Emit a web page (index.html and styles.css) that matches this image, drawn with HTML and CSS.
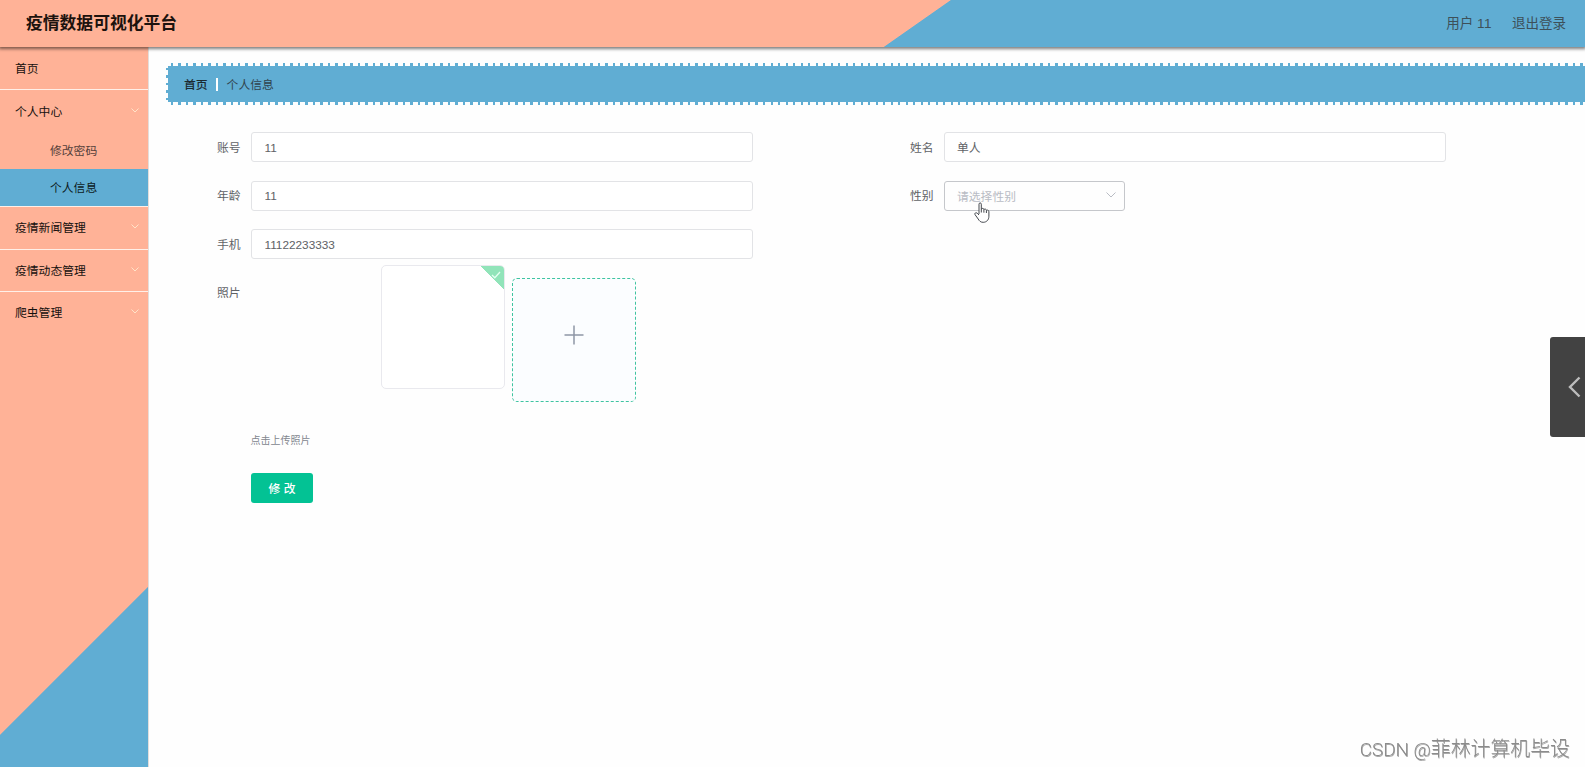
FILE: index.html
```html
<!DOCTYPE html>
<html lang="zh-CN">
<head>
  <meta charset="UTF-8">
  <meta name="viewport" content="width=device-width, initial-scale=1.0">
  <title>疫情数据可视化平台</title>
  <link rel="stylesheet" href="styles.css">
</head>
<body>

  <header class="header">
    <h1 class="title">疫情数据可视化平台</h1>
    <div class="user-menu">
      <span>用户 <span class="user-name">11</span></span>
      <span>退出登录</span>
    </div>
  </header>

  <div class="container">
    <!-- Sidebar -->
    <nav class="sidebar">
      <div class="menu-item first">首页</div>
      <div class="menu-item open">个人中心
        <svg class="arrow" viewBox="0 0 8 5"><path d="M0.5 0.5 L4 4 L7.5 0.5"/></svg>
      </div>
      <div class="submenu">
        <div class="submenu-item">修改密码</div>
        <div class="submenu-item active">个人信息</div>
      </div>
      <div class="menu-item">疫情新闻管理
        <svg class="arrow" viewBox="0 0 8 5"><path d="M0.5 0.5 L4 4 L7.5 0.5"/></svg>
      </div>
      <div class="menu-item">疫情动态管理
        <svg class="arrow" viewBox="0 0 8 5"><path d="M0.5 0.5 L4 4 L7.5 0.5"/></svg>
      </div>
      <div class="menu-item">爬虫管理
        <svg class="arrow" viewBox="0 0 8 5"><path d="M0.5 0.5 L4 4 L7.5 0.5"/></svg>
      </div>
    </nav>

    <main class="main">
      <div class="breadcrumb">
        <div class="breadcrumb-inner">
          <span class="home">首页</span>
          <span class="separator"></span>
          <span>个人信息</span>
        </div>
      </div>

      <!-- Profile form -->
      <form class="form">
        <div class="form-group">
          <label for="account">账号</label>
          <input type="text" id="account" value="11">
        </div>
        <div class="form-group">
          <label for="name">姓名</label>
          <input type="text" id="name" class="name" value="单人">
        </div>
        <div class="form-group">
          <label for="age">年龄</label>
          <input type="text" id="age" value="11">
        </div>
        <div class="form-group">
          <label>性别</label>
          <div class="select">
            <span>请选择性别</span>
            <svg class="select-arrow" viewBox="0 0 10 6"><path d="M0.5 0.5 L5 5 L9.5 0.5"/></svg>
            <svg class="pointer" viewBox="0 0 16 21"><path d="M5 12 V2.2 C5 0.4 7.3 0.4 7.3 2.2 V7 C8.2 5.9 9.8 6.3 9.9 7.5 C10.9 6.7 12.3 7.1 12.4 8.3 C13.4 7.7 14.9 8.2 14.9 9.7 V14.2 C14.9 18 12.4 20.3 9.2 20.3 C6.5 20.3 5.4 19 4.2 17 L1 12.6 C0.3 11.3 1.9 10 3.2 11.2 L5 13 M7.3 7 V10.5 M9.9 7.5 V10.7 M12.4 8.3 V11"/></svg>
          </div>
        </div>
        <div class="form-group full">
          <label for="phone">手机</label>
          <input type="text" id="phone" value="11122233333">
        </div>
        <div class="form-group full photo">
          <label>照片</label>
          <div class="upload-list">
            <div class="upload-card">
              <div class="upload-status">
                <svg viewBox="0 0 10 8"><path d="M1 4 L3.8 6.7 L9 1"/></svg>
              </div>
            </div>
            <div class="upload-add">
              <svg viewBox="0 0 20 20"><path d="M10 0.5 V19.5 M0.5 10 H19.5"/></svg>
            </div>
          </div>
        </div>
      </form>
      <p class="upload-tip">点击上传照片</p>
      <button type="button" class="submit">修 改</button>
    </main>
  </div>

  <div class="side-handle">
    <svg viewBox="0 0 12 22"><path d="M11 1.5 L1.5 11 L11 20.5"/></svg>
  </div>
  <div class="watermark"><span class="latin">CSDN @</span>菲林计算机毕设</div>

</body>
</html>
```
FILE: styles.css
```css
* {
  box-sizing: border-box;
}

body {
  margin: 0;
  height: 767px;
  overflow: hidden;
  background-color: #fefefe;
  font-family: "Liberation Sans", "Noto Sans CJK SC", sans-serif;
  font-size: 11.8px;
  color: #606266;
}

svg {
  fill: none;
  stroke: currentColor;
}

.header {
  position: relative;
  display: flex;
  justify-content: space-between;
  align-items: center;
  height: 47px;
  padding: 0 19px 4px 26px;
  background: linear-gradient(145deg, #ffb297 545px, #60add3 545.8px);
  box-shadow: 0 1px 3px 1px rgba(0, 0, 0, 0.5);
}

.title {
  margin: 0;
  font-size: 16.8px;
  font-weight: bold;
  color: #1c120e;
}

.user-menu {
  display: flex;
  gap: 20px;
  font-size: 13.5px;
  color: #3d5059;
}

.user-name {
  letter-spacing: 0.5px;
}

.container {
  display: flex;
  height: 720px;
}

.sidebar {
  flex: none;
  width: 149px;
  background: linear-gradient(135deg, #ffb297 486px, #60add3 486.8px);
  border-right: 1px solid #e3dedb;
  color: #15100e;
}

.menu-item {
  display: flex;
  justify-content: space-between;
  align-items: center;
  height: 42.5px;
  padding: 0 9px 2px 15px;
  border-top: 1px solid #fff0e8;
}

.menu-item.first {
  height: 42px;
  border-top: none;
}

.menu-item.open {
  height: 43px;
}

.arrow {
  width: 8px;
  height: 5px;
  color: #ffe3c8;
}

.submenu-item {
  height: 37px;
  line-height: 37px;
  padding-top: 1px;
  padding-left: 50px;
  color: #55403a;
}

.submenu-item.active {
  background-color: #60add3;
  color: #0d1a22;
}

.main {
  flex: 1;
  min-width: 0;
  padding: 16px 0 0 17px;
}

/* square notches round the bar */
.breadcrumb {
  height: 42px;
  padding: 3px 0 3px 2px;
  background:
    repeating-linear-gradient(90deg, transparent 0 4.5px, #60add3 4.5px 7px, transparent 7px 7.5px) top / 100% 3px no-repeat,
    repeating-linear-gradient(90deg, transparent 0 4.5px, #60add3 4.5px 7px, transparent 7px 7.5px) bottom / 100% 3px no-repeat,
    repeating-linear-gradient(180deg, transparent 0 5px, #60add3 5px 7.4px) left / 3px 100% no-repeat;
}

.breadcrumb-inner {
  display: flex;
  align-items: center;
  height: 36px;
  padding: 0 0 2px 16px;
  background-color: #60add3;
  color: #30444e;
}

.breadcrumb .home {
  color: #1b2930;
  font-weight: 500;
}

.separator {
  width: 2px;
  height: 13px;
  margin: 3px 9px 0 8px;
  background-color: #fff;
}

.form {
  display: grid;
  grid-template-columns: 693px 693px;
  row-gap: 18.5px;
  padding-top: 27px;
  padding-left: 35px;
}

.form-group {
  display: flex;
  align-items: center;
  height: 30px;
}

.form-group.full {
  grid-column: 1 / 3;
}

label {
  width: 40px;
  padding-right: 10.5px;
  padding-bottom: 2px;
  text-align: right;
  flex: none;
  margin-left: 10px;
}

input[type="text"] {
  width: 502px;
  height: 30px;
  padding: 1px 12.5px 0;
  border: 1px solid #e2e3e6;
  border-radius: 3px;
  background-color: #fff;
  font: inherit;
  color: #606266;
}

input[type="text"].name {
  padding: 0 12px 2px;
}

.select {
  position: relative;
  display: flex;
  justify-content: space-between;
  align-items: center;
  width: 181px;
  height: 30px;
  padding: 0 8px 1px 12px;
  border: 1px solid #c5c7cb;
  border-radius: 3px;
  color: #b9bcc4;
}

.select-arrow {
  width: 10px;
  height: 6px;
}

.pointer {
  position: absolute;
  left: 29px;
  top: 20px;
  width: 16px;
  height: 21px;
  fill: #fff;
  color: #44484e;
}

.form-group.photo {
  height: 125px;
  align-items: flex-start;
}

.photo label {
  line-height: 30px;
}

.upload-list {
  display: flex;
  gap: 7px;
  padding-left: 130px;
}

.upload-card,
.upload-add {
  width: 124px;
  height: 124px;
  border-radius: 5px;
}

.upload-card {
  margin-top: -13px;
  overflow: hidden;
  border: 1px solid #e9e9ee;
  background-color: #fff;
}

.upload-status {
  width: 24px;
  height: 24px;
  margin-left: auto;
  padding: 5px 3px 0 11px;
  background: linear-gradient(45deg, transparent 50%, #91e4b9 51%);
  color: #e4fff1;
}

.upload-status svg {
  display: block;
  width: 10px;
  height: 8px;
  stroke-width: 1.3;
}

.upload-add {
  display: flex;
  align-items: center;
  justify-content: center;
  border: 1px dashed #3fc4a0;
  background-color: #fbfdff;
  color: #8f96a6;
}

.upload-add svg {
  width: 20px;
  height: 20px;
  margin-top: -9px;
  stroke-width: 1.5;
}

.upload-tip {
  margin: 30px 0 0 84.5px;
  font-size: 10px;
  line-height: 16px;
  color: #82868e;
}

.submit {
  display: block;
  width: 62px;
  height: 30px;
  margin: 24px 0 0 85px;
  padding: 0 0 1px;
  border: none;
  border-radius: 3px;
  background-color: #03c294;
  font: inherit;
  font-weight: 500;
  color: #fff;
}

.side-handle {
  position: fixed;
  right: 0;
  top: 337px;
  width: 35px;
  height: 100px;
  padding: 39px 0 0 18px;
  border-radius: 3px 0 0 3px;
  background-color: #424242;
  color: #bdbdbd;
}

.side-handle svg {
  display: block;
  width: 13px;
  height: 22px;
  stroke-width: 2.4;
}

.watermark {
  position: fixed;
  right: 15px;
  bottom: 5px;
  font-size: 19.9px;
  color: #8b8b8b;
  font-weight: 300;
  text-shadow: 0.5px 0.5px 0 #aaa;
}

.watermark .latin {
  font-family: Roboto, "Liberation Sans", sans-serif;
  font-size: 19px;
  letter-spacing: -0.1px;
}
```
